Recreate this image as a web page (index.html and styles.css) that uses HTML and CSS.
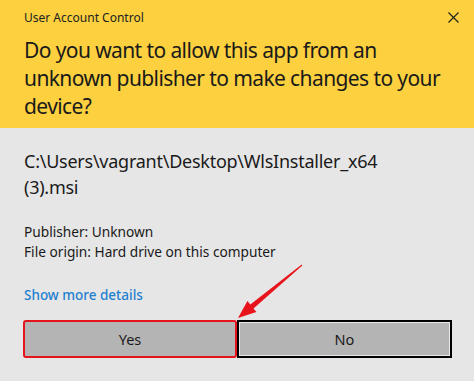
FILE: index.html
```html
<!DOCTYPE html>
<html lang="en">
<head>
  <meta charset="UTF-8" />
  <title>User Account Control</title>
  <link rel="stylesheet" href="styles.css">
</head>
<body>
  <div class="dialog">

    <!-- Yellow header -->
    <div class="header">
      <div class="title-row">
        <span class="title">User Account Control</span>
        <svg class="close" width="11" height="11" viewBox="0 0 11 11">
          <path d="M0.5 0.5 L10.5 10.5 M10.5 0.5 L0.5 10.5" stroke="#1d1d1d" stroke-width="1.1" fill="none"/>
        </svg>
      </div>
      <div class="question">Do you want to allow this app from an unknown publisher to make changes to your device?</div>
    </div>

    <!-- Body -->
    <div class="content">
      <div class="program">C:\Users\vagrant\Desktop\WlsInstaller_x64 (3).msi</div>
      <div class="meta">
        <div>Publisher: Unknown</div>
        <div>File origin: Hard drive on this computer</div>
      </div>
      <a class="more" href="#">Show more details</a>
      <div class="buttons">
        <button class="btn yes">Yes</button>
        <button class="btn no">No</button>
      </div>
    </div>

    <!-- annotation arrow -->
    <svg class="arrow" width="474" height="381" viewBox="0 0 474 381">
      <polygon points="301.7,264.6 250.3,304.6 247.4,301.1 238,318 256.4,311.9 253.5,308.4 302.3,265.4" fill="#e8141b"/>
    </svg>
  </div>
</body>
</html>
```

FILE: styles.css
```css
body { margin: 0; font-family: 'Noto Sans', 'Open Sans', sans-serif; color: #111; }

.dialog { position: relative; width: 474px; height: 381px; background: #e6e6e6; overflow: hidden; }

.header { background: #fcd03e; height: 128px; box-sizing: border-box; padding: 6px 15px 0 24px; }
.title-row { display: flex; justify-content: space-between; align-items: center; height: 22px; }
.title { font-size: 12px; color: #222; }
.question { font-size: 21px; line-height: 28px; letter-spacing: -0.6px; margin-top: 8px; color: #1a1a1a; width: 430px; }

.content { padding: 20px 22px 0 24px; }
.program { font-size: 18px; line-height: 26px; letter-spacing: -0.25px; color: #1a1a1a; width: 380px; }
.meta { margin-top: 22px; font-size: 13.7px; line-height: 20px; color: #1a1a1a; }
.more {
  display: block; margin-top: 24px; font-size: 13.5px; font-weight: 500;
  color: #1f80d0; text-decoration: none;
}

.buttons { display: flex; margin-top: 16px; margin-left: -1px; }
.btn {
  height: 38px; font-family: inherit; font-size: 14.5px; color: #1a1a1a;
  background: #b4b4b4; box-sizing: border-box;
}
.btn.yes { width: 214px; border: 2px solid #e5141c; border-radius: 3px; }
.btn.no { width: 215px; border: 2px solid #000; box-shadow: inset 0 0 0 1px #e9e9e9; }

.arrow { position: absolute; left: 0; top: 0; pointer-events: none; }
```
